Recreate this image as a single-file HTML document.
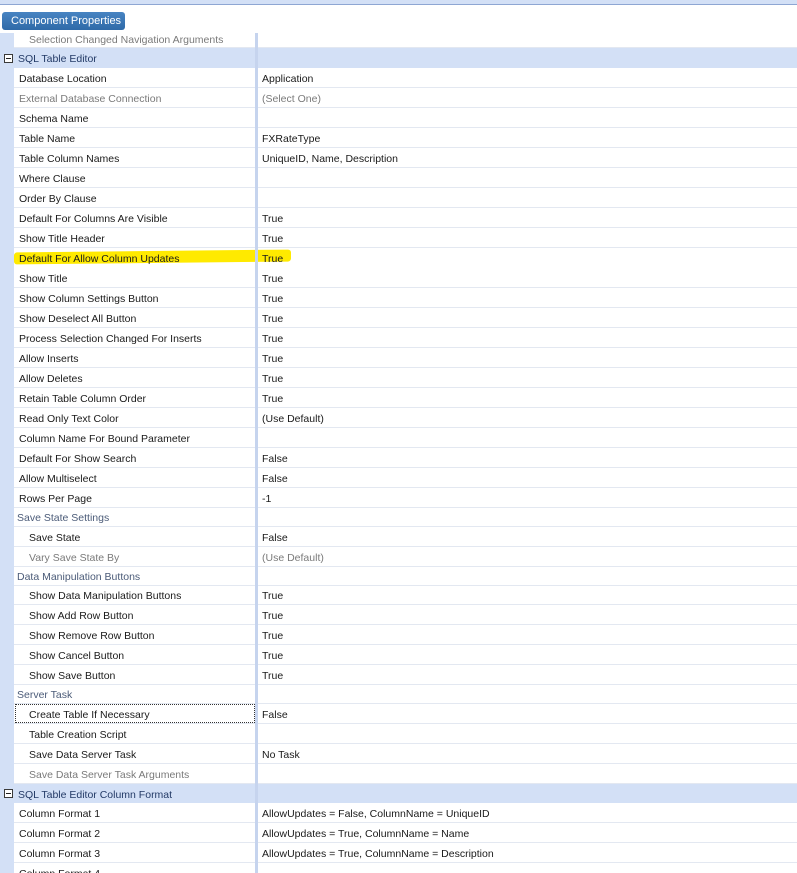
<!DOCTYPE html>
<html><head><meta charset="utf-8"><style>
*{margin:0;padding:0;box-sizing:border-box}
html,body{width:797px;height:873px;overflow:hidden}
body{background:#fff;font-family:"Liberation Sans",sans-serif;font-size:10.5px;color:#1a1a1a;position:relative}
.top{position:absolute;left:0;top:0;width:797px;height:5px;background:#d3e0f6;border-bottom:1px solid #8ea6d3}
.btn{position:absolute;left:2px;top:12px;width:123px;height:18px;background:linear-gradient(#4884c2,#2f6aa8);border-radius:3px;color:#fff;font-size:11px;line-height:18px;padding-left:9px}
.gut{position:absolute;left:0;top:33px;width:14px;height:840px;background:#d3e0f6}
.sep{position:absolute;left:255px;top:33px;width:3px;height:840px;background:#c6d4ee}
.r{position:absolute;left:14px;width:783px;border-bottom:1px solid #e3e8f1}
.r span{position:absolute;top:calc(50% + 1px);transform:translateY(-50%);white-space:nowrap}
.r .v{left:248px}
.n{left:5px}.s{left:15px}.g{left:3px;color:#4b5b78}
.d{color:#7a7a7a}
.h{left:0;width:797px;background:#d3e0f6;border-bottom:none}
.h .n{color:#233a66;left:4px}
.box{position:absolute;left:4px;width:9px;height:9px;border:1px solid #3a3a3a;background:#fff}
.box:after{content:"";position:absolute;left:1px;top:3px;width:5px;height:1px;background:#222}
.hl{position:absolute;left:14px;top:251px;width:277px;height:12px;background:#ffea00;transform:skewY(-0.6deg);border-radius:3px}
.dot{position:absolute;left:15px;top:704px;width:240px;height:19px;border:1px dotted #333}
</style></head><body>
<div class="top"></div>
<div class="btn">Component Properties</div>
<div class="gut"></div>
<div class="hl"></div>
<div class="r" style="top:31px;height:17px"><span class="s d" style="left:15px">Selection Changed Navigation Arguments</span></div>
<div class="r h" style="top:48px;height:20px"><span class="n" style="left:18px">SQL Table Editor</span></div>
<div class="box" style="top:54px"></div>
<div class="r" style="top:68px;height:20px"><span class="n">Database Location</span><span class="v">Application</span></div>
<div class="r" style="top:88px;height:20px"><span class="n d">External Database Connection</span><span class="v d">(Select One)</span></div>
<div class="r" style="top:108px;height:20px"><span class="n">Schema Name</span></div>
<div class="r" style="top:128px;height:20px"><span class="n">Table Name</span><span class="v">FXRateType</span></div>
<div class="r" style="top:148px;height:20px"><span class="n">Table Column Names</span><span class="v">UniqueID, Name, Description</span></div>
<div class="r" style="top:168px;height:20px"><span class="n">Where Clause</span></div>
<div class="r" style="top:188px;height:20px"><span class="n">Order By Clause</span></div>
<div class="r" style="top:208px;height:20px"><span class="n">Default For Columns Are Visible</span><span class="v">True</span></div>
<div class="r" style="top:228px;height:20px"><span class="n">Show Title Header</span><span class="v">True</span></div>
<div class="r" style="top:248px;height:20px;border-bottom-color:transparent"><span class="n">Default For Allow Column Updates</span><span class="v">True</span></div>
<div class="r" style="top:268px;height:20px"><span class="n">Show Title</span><span class="v">True</span></div>
<div class="r" style="top:288px;height:20px"><span class="n">Show Column Settings Button</span><span class="v">True</span></div>
<div class="r" style="top:308px;height:20px"><span class="n">Show Deselect All Button</span><span class="v">True</span></div>
<div class="r" style="top:328px;height:20px"><span class="n">Process Selection Changed For Inserts</span><span class="v">True</span></div>
<div class="r" style="top:348px;height:20px"><span class="n">Allow Inserts</span><span class="v">True</span></div>
<div class="r" style="top:368px;height:20px"><span class="n">Allow Deletes</span><span class="v">True</span></div>
<div class="r" style="top:388px;height:20px"><span class="n">Retain Table Column Order</span><span class="v">True</span></div>
<div class="r" style="top:408px;height:20px"><span class="n">Read Only Text Color</span><span class="v">(Use Default)</span></div>
<div class="r" style="top:428px;height:20px"><span class="n">Column Name For Bound Parameter</span></div>
<div class="r" style="top:448px;height:20px"><span class="n">Default For Show Search</span><span class="v">False</span></div>
<div class="r" style="top:468px;height:20px"><span class="n">Allow Multiselect</span><span class="v">False</span></div>
<div class="r" style="top:488px;height:20px"><span class="n">Rows Per Page</span><span class="v">-1</span></div>
<div class="r" style="top:508px;height:19px"><span class="g">Save State Settings</span></div>
<div class="r" style="top:527px;height:20px"><span class="s">Save State</span><span class="v">False</span></div>
<div class="r" style="top:547px;height:20px"><span class="s d">Vary Save State By</span><span class="v d">(Use Default)</span></div>
<div class="r" style="top:567px;height:19px"><span class="g">Data Manipulation Buttons</span></div>
<div class="r" style="top:586px;height:19px"><span class="s">Show Data Manipulation Buttons</span><span class="v">True</span></div>
<div class="r" style="top:605px;height:20px"><span class="s">Show Add Row Button</span><span class="v">True</span></div>
<div class="r" style="top:625px;height:20px"><span class="s">Show Remove Row Button</span><span class="v">True</span></div>
<div class="r" style="top:645px;height:20px"><span class="s">Show Cancel Button</span><span class="v">True</span></div>
<div class="r" style="top:665px;height:20px"><span class="s">Show Save Button</span><span class="v">True</span></div>
<div class="r" style="top:685px;height:19px"><span class="g">Server Task</span></div>
<div class="r" style="top:704px;height:20px"><span class="s">Create Table If Necessary</span><span class="v">False</span></div>
<div class="dot"></div>
<div class="r" style="top:724px;height:20px"><span class="s">Table Creation Script</span></div>
<div class="r" style="top:744px;height:20px"><span class="s">Save Data Server Task</span><span class="v">No Task</span></div>
<div class="r" style="top:764px;height:20px"><span class="s d">Save Data Server Task Arguments</span></div>
<div class="r h" style="top:784px;height:19px"><span class="n" style="left:18px">SQL Table Editor Column Format</span></div>
<div class="box" style="top:789px"></div>
<div class="r" style="top:803px;height:20px"><span class="n">Column Format 1</span><span class="v">AllowUpdates = False, ColumnName = UniqueID</span></div>
<div class="r" style="top:823px;height:20px"><span class="n">Column Format 2</span><span class="v">AllowUpdates = True, ColumnName = Name</span></div>
<div class="r" style="top:843px;height:20px"><span class="n">Column Format 3</span><span class="v">AllowUpdates = True, ColumnName = Description</span></div>
<div class="r" style="top:863px;height:20px"><span class="n">Column Format 4</span></div>
<div class="sep"></div>
</body></html>
